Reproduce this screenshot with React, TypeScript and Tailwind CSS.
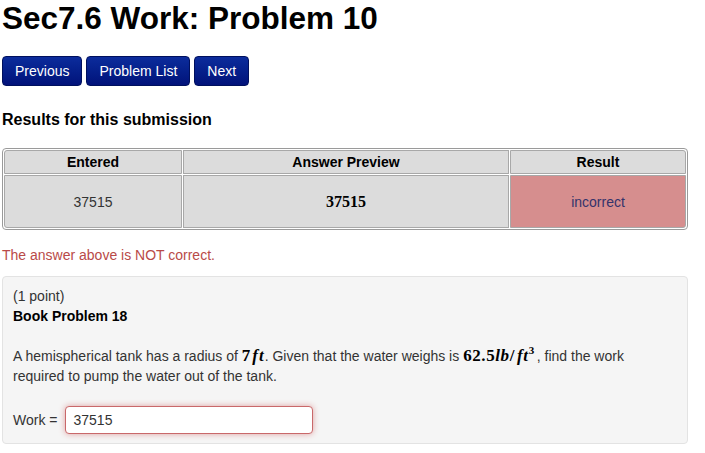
import React from "react";

const sans = { fontFamily: '"Liberation Sans", Arial, sans-serif' };
const serif = { fontFamily: '"Liberation Serif", "DejaVu Serif", serif' };

function NavButton({ label }: { label: string }) {
  return (
    <button
      type="button"
      className="h-[30px] rounded-[4px] border border-[#00105e] bg-gradient-to-b from-[#0c2c9c] to-[#02127a] px-[12px] text-[14px] leading-[28px] text-white"
    >
      {label}
    </button>
  );
}

function Cell({ children, className = "" }: { children: React.ReactNode; className?: string }) {
  return (
    <div className={`flex items-center justify-center border border-[#a8a8a8] ${className}`}>{children}</div>
  );
}

export default function App() {
  return (
    <div className="min-h-[453px] w-[705px] bg-white pl-[2px] text-[14px] leading-[20px] text-[#333]" style={sans}>
      <h1 className="text-[31.5px] font-bold leading-[36px] text-black">Sec7.6 Work: Problem 10</h1>

      <div className="mt-[20px] flex gap-[4px]">
        <NavButton label="Previous" />
        <NavButton label="Problem List" />
        <NavButton label="Next" />
      </div>

      <h3 className="mt-[24px] text-[16px] font-bold leading-[20px] text-black">Results for this submission</h3>

      <div className="mt-[18px] grid w-[686px] grid-cols-[178px_326px_176px] gap-[1px] rounded-[4px] border border-[#9a9a9a] p-[1px]">
        <Cell className="h-[24px] rounded-tl-[3px] bg-[#dcdcdc] font-bold text-black">Entered</Cell>
        <Cell className="h-[24px] bg-[#dcdcdc] font-bold text-black">Answer Preview</Cell>
        <Cell className="h-[24px] rounded-tr-[3px] bg-[#dcdcdc] font-bold text-black">Result</Cell>
        <Cell className="h-[53px] rounded-bl-[3px] bg-[#dcdcdc]">37515</Cell>
        <Cell className="h-[53px] bg-[#dcdcdc]">
          <span className="text-[16px] font-bold text-black" style={serif}>
            37515
          </span>
        </Cell>
        <Cell className="h-[53px] rounded-br-[3px] bg-[#d68e8e] text-[#34336b]">incorrect</Cell>
      </div>

      <p className="mt-[15px] text-[#b94a48]">The answer above is NOT correct.</p>

      <div className="mt-[11px] w-[686px] rounded-[4px] border border-[#e3e3e3] bg-[#f5f5f5] px-[10px] pb-[9px] pt-[9px]">
        <div>(1 point)</div>
        <div className="font-bold text-black">Book Problem 18</div>
        <p className="mt-[20px]">
          A hemispherical tank has a radius of{" "}
          <span className="text-[17px] font-bold leading-none text-black" style={serif}>
            7<i className="ml-[2px] tracking-[1px]">ft</i>
          </span>
          . Given that the water weighs is{" "}
          <span className="text-[17px] font-bold leading-none tracking-[0.6px] text-black" style={serif}>
            62.5<i>lb</i>/<i className="ml-[2px]">ft</i>
            <span className="relative -top-[7px] text-[11px] leading-none">3</span>
          </span>
          <span className="ml-[2px]">, find the work required to pump the water out of the tank.</span>
        </p>
        <div className="mt-[20px] flex items-center gap-[8px]">
          <span>Work =</span>
          <div className="flex h-[28px] w-[248px] items-center rounded-[4px] border border-[#c9686a] bg-white px-[7px] text-[14px] text-[#333] shadow-[0_0_6px_#e0a0a0]">
            37515
          </div>
        </div>
      </div>
    </div>
  );
}
